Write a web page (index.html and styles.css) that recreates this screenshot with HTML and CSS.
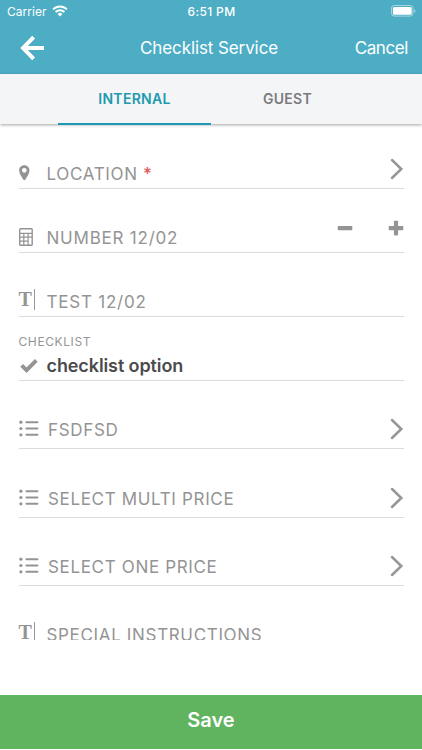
FILE: index.html
```html
<!DOCTYPE html>
<html lang="en">
<head>
<meta charset="utf-8">
<title>Checklist Service</title>
<link rel="stylesheet" href="styles.css">
</head>
<body>
<svg class="defs" width="0" height="0">
  <symbol id="chevron" viewBox="0 0 14 22"><path d="M2 2l9.3 9L2 20" fill="none" stroke="#969696" stroke-width="2.5" stroke-linecap="round"/></symbol>
  <symbol id="list" viewBox="0 0 20 17"><g fill="#949494"><circle cx="1.9" cy="2.2" r="1.6"/><circle cx="1.9" cy="8.5" r="1.6"/><circle cx="1.9" cy="14.8" r="1.6"/></g><path d="M7.4 2.2h11.1M7.4 8.5h11.1M7.4 14.8h11.1" stroke="#949494" stroke-width="1.9" stroke-linecap="round"/></symbol>
</svg>
<div class="screen">
  <header class="header">
    <div class="status">
      <div class="carrier"><span>Carrier</span>
        <svg width="16" height="12" viewBox="0 0 16 12"><g fill="none" stroke="#fff" stroke-width="1.9"><path d="M1.1 4.3a9.8 9.8 0 0 1 13.8 0"/><path d="M3.6 7a6.3 6.3 0 0 1 8.8 0"/></g><path d="M5.6 8.9a3.5 3.5 0 0 1 4.8 0L8 11.5z" fill="#fff"/></svg>
      </div>
      <span class="time">6:51 PM</span>
      <svg class="battery" width="25" height="12" viewBox="0 0 25 12"><rect x=".5" y=".5" width="21.5" height="10.6" rx="2.8" fill="none" stroke="#fff" stroke-opacity=".5"/><rect x="1.9" y="1.9" width="18.8" height="7.8" rx="1.5" fill="#fff"/><path d="M23.3 4v3.8q1.3-.5 1.3-1.9T23.3 4z" fill="#fff" fill-opacity=".5"/></svg>
    </div>
    <div class="nav">
      <svg width="24" height="26" viewBox="0 0 24 26"><path d="M13.6 2.2L3.1 13l10.5 10.8M3.4 13H24" fill="none" stroke="#fff" stroke-width="4"/></svg>
      <span class="title">Checklist Service</span>
      <span class="cancel">Cancel</span>
    </div>
  </header>
  <nav class="tabs">
    <div class="tab active"><span>INTERNAL</span></div>
    <div class="tab"><span>GUEST</span></div>
  </nav>
  <main class="form">
    <div class="row">
      <svg class="icon pin" width="11" height="16" viewBox="0 0 11 16"><path fill-rule="evenodd" d="M5.3.2C2.3.2.1 2.4.1 5.3c0 3.2 2.2 5.6 3.7 8.8.6 1.4 2.4 1.4 3 0 1.5-3.2 3.7-5.6 3.7-8.8 0-2.9-2.2-5.1-5.2-5.1zm0 2.7a2.4 2.4 0 1 1 0 4.8 2.4 2.4 0 0 1 0-4.8z" fill="#949494"/></svg>
      <span class="label">LOCATION <b>*</b></span>
      <svg class="chevron" width="14" height="22"><use href="#chevron"/></svg>
    </div>
    <div class="row">
      <svg class="icon calc" width="14" height="18" viewBox="0 0 14 18"><rect x=".7" y=".7" width="12.5" height="16.5" rx=".8" fill="none" stroke="#949494" stroke-width="1.4"/><path d="M1 5.3h12M1 9.1h12M1 13.1h8.5M4.8 5.3V17M9.1 5.3V17" stroke="#949494" stroke-width="1.2"/></svg>
      <span class="label number">NUMBER 12/02</span>
      <svg class="stepper" width="68" height="16" viewBox="0 0 68 16"><g fill="#949494"><rect x="1.7" y="6" width="14.6" height="4.2" rx=".8"/><rect x="52.7" y="6" width="14.6" height="4.2" rx=".8"/><rect x="57.9" y=".8" width="4.2" height="14.6" rx=".8"/></g></svg>
    </div>
    <div class="row">
      <span class="icon text-icon"><span>T</span></span>
      <span class="label number">TEST 12/02</span>
    </div>
    <div class="row checklist">
      <div class="caption">CHECKLIST</div>
      <div class="choice">
        <svg width="18" height="15" viewBox="0 0 18 15"><path d="M1.6 7.4l5 4.8L16.3 2.4" fill="none" stroke="#949494" stroke-width="3.9"/></svg>
        <span class="option">checklist option</span>
      </div>
    </div>
    <div class="row select">
      <svg class="icon" width="20" height="17"><use href="#list"/></svg>
      <span class="label">FSDFSD</span>
      <svg class="chevron" width="14" height="22"><use href="#chevron"/></svg>
    </div>
    <div class="row select">
      <svg class="icon" width="20" height="17"><use href="#list"/></svg>
      <span class="label">SELECT MULTI PRICE</span>
      <svg class="chevron" width="14" height="22"><use href="#chevron"/></svg>
    </div>
    <div class="row select">
      <svg class="icon" width="20" height="17"><use href="#list"/></svg>
      <span class="label">SELECT ONE PRICE</span>
      <svg class="chevron" width="14" height="22"><use href="#chevron"/></svg>
    </div>
    <div class="row">
      <span class="icon text-icon"><span>T</span></span>
      <span class="label">SPECIAL INSTRUCTIONS</span>
    </div>
  </main>
  <footer class="save">Save</footer>
</div>
</body>
</html>
```
FILE: styles.css
```css
* { box-sizing: border-box; }
body { margin: 0; background: #fff; font-family: Inter, sans-serif; }
svg { display: block; flex: none; }
.defs { position: absolute; }
.screen { width: 422px; height: 750px; display: flex; flex-direction: column; overflow: hidden; }
.header { height: 74px; flex: none; background: #4dadc4; color: #fff; }
.status { height: 22px; display: grid; grid-template-columns: 1fr auto 1fr; align-items: center; padding: 0 6px 0 7px; font-size: 12px; }
.carrier { display: flex; align-items: center; gap: 4px; letter-spacing: .05px; }
.carrier svg { margin-left: 1px; }
.time { font-weight: 500; letter-spacing: .35px; }
.battery { justify-self: end; }
.nav { height: 52px; display: grid; grid-template-columns: 120px auto 1fr; align-items: center; padding: 0 14px 0 20px; font-size: 17px; }
.title { font-size: 17px; letter-spacing: -.1px; }
.cancel { justify-self: end; letter-spacing: -.4px; }
.tabs { height: 50px; flex: none; display: flex; justify-content: center; background: #f4f5f7; box-shadow: 0 1px 3px rgba(0,0,0,.35); }
.tab { width: 153px; height: 51px; display: flex; justify-content: center; align-items: center; border-bottom: 2px solid transparent; font-size: 14px; font-weight: 600; letter-spacing: .3px; color: #7b7b7d; }
.tab.active { color: #1f99ae; border-color: #1f99b2; }
.form { height: 515px; flex: none; overflow: hidden; padding: 0 18px 0 18.5px; margin-top: 1px; }
.row { height: 64px; display: flex; align-items: flex-end; border-bottom: 1px solid #dcdcdc; padding-bottom: 4px; }
.icon { margin-bottom: 3px; }
.label { font-size: 17px; line-height: 20px; letter-spacing: .66px; color: #949494; white-space: nowrap; }
.label.number { letter-spacing: .78px; }
.label b { color: #e0595c; font-weight: 500; }
.pin { margin-right: 17px; }
.calc { margin-right: 14px; margin-bottom: 2px; }
.chevron { margin-left: auto; margin-bottom: 4px; }
.stepper { margin-left: auto; margin-bottom: 12px; }
.text-icon { width: 16px; height: 21px; margin: 0 12px 2px 0; border-right: 1px solid #999; font: 700 20px/20px "Liberation Serif", serif; color: #949494; }
.checklist { flex-direction: column; align-items: flex-start; justify-content: flex-end; padding-bottom: 0; }
.caption { font-size: 12px; line-height: 16px; letter-spacing: .6px; color: #949494; }
.choice { display: flex; align-items: center; gap: 9px; height: 30px; padding-left: 1px; }
.option { font-size: 18px; font-weight: 600; letter-spacing: -.1px; color: #4b4b4d; }
.select { height: 68.4px; padding-bottom: 8px; }
.select .icon { margin-right: 9.5px; }
.select .chevron { margin-bottom: 0; }
.save { height: 54px; flex: none; margin-top: 55px; background: #60b45f; color: #fff; display: flex; align-items: center; justify-content: center; font-size: 20px; font-weight: 600; padding-bottom: 4px; }
```
